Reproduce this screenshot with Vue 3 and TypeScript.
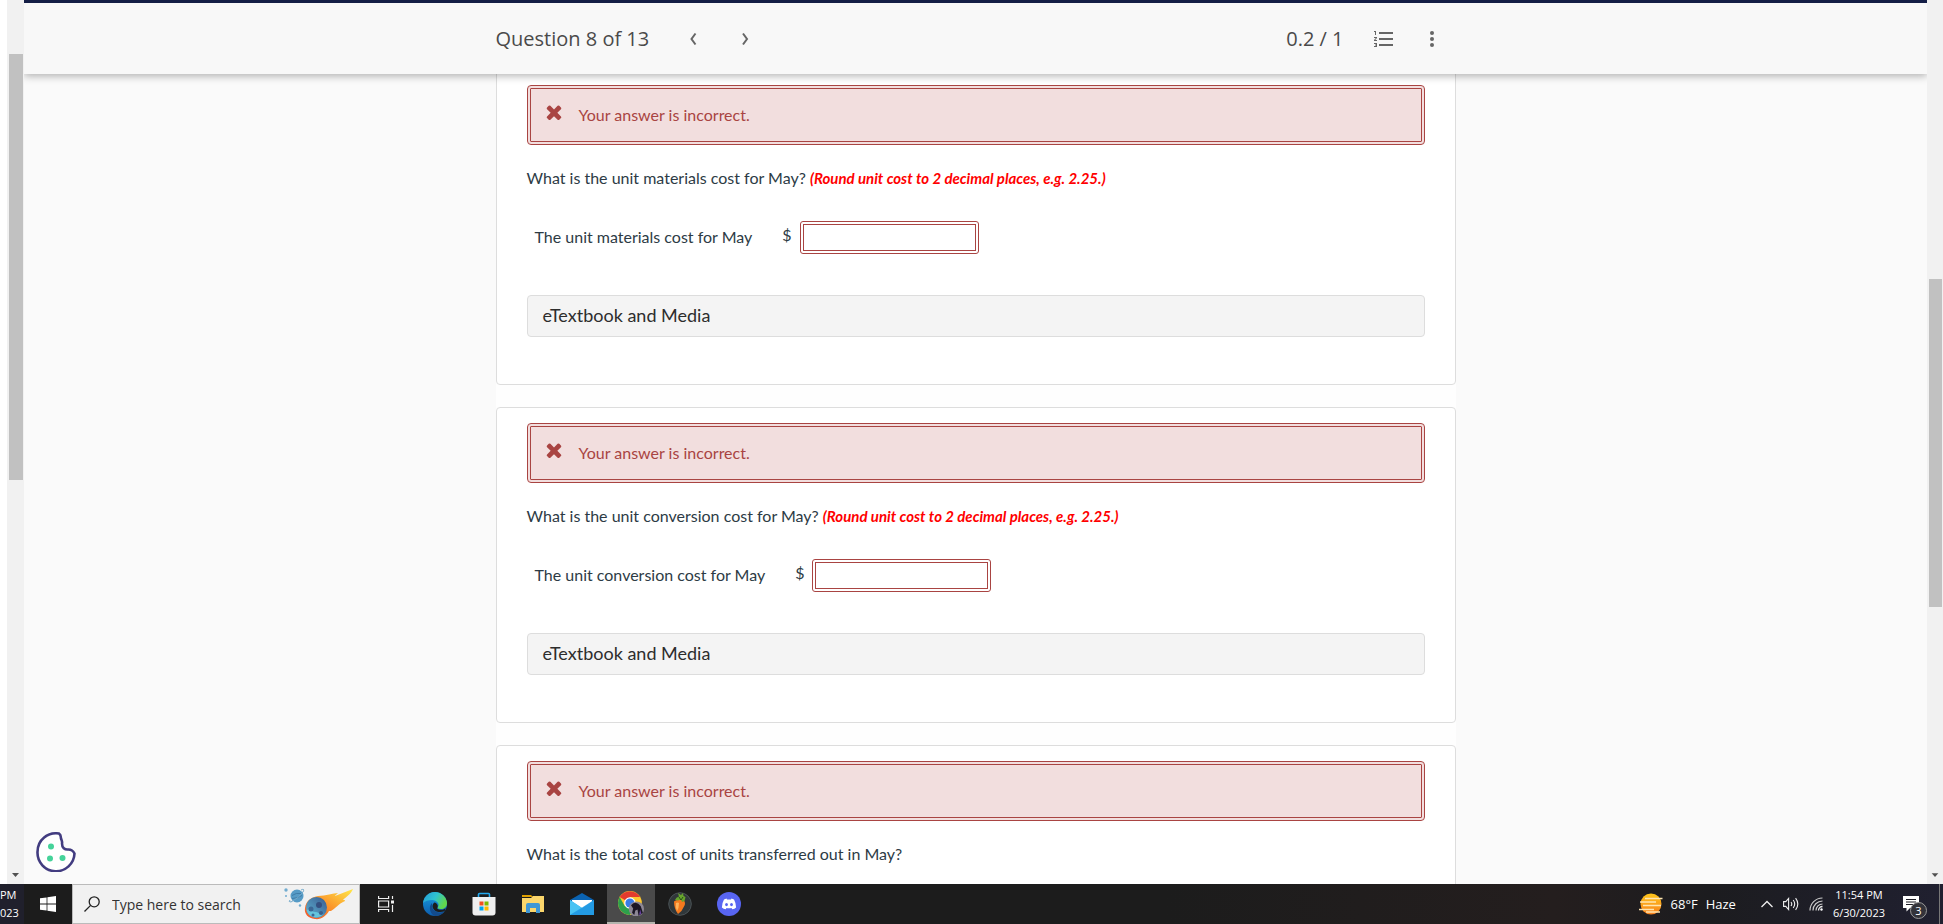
<script setup lang="ts">
import { ref } from 'vue'

interface Part {
  id: string
  question: string
  hint?: string
  label?: string
}

const parts: Part[] = [
  {
    id: 'materials',
    question: 'What is the unit materials cost for May?',
    hint: '(Round unit cost to 2 decimal places, e.g. 2.25.)',
    label: 'The unit materials cost for May',
  },
  {
    id: 'conversion',
    question: 'What is the unit conversion cost for May?',
    hint: '(Round unit cost to 2 decimal places, e.g. 2.25.)',
    label: 'The unit conversion cost for May',
  },
  { id: 'total', question: 'What is the total cost of units transferred out in May?' },
]

const answers = ref<Record<string, string>>({ materials: '', conversion: '' })

// Space before the thumb, thumb length, space after it.
const outerScroll = [54, 426, 387]
const pageScroll = [279, 328, 260]
const rows = (s: number[]) => ({ gridTemplateRows: s.map((n) => `${n}fr`).join(' ') })
</script>

<template>
  <div class="screen">
    <div class="workspace">
      <div class="edge"></div>
      <div class="scrollbar outer">
        <div class="track" :style="rows(outerScroll)"><span class="thumb"></span></div>
        <svg class="arrow" viewBox="0 0 17 17"><path d="M5 6h7l-3.500 4z" fill="#505050" /></svg>
      </div>

      <main class="main">
        <header class="topbar">
          <div class="topbar-inner">
            <h1 class="title">Question 8 of 13</h1>
            <nav class="pager">
              <button class="icon-btn" aria-label="Previous question">
                <svg viewBox="0 0 24 24" width="24" height="24"><path d="M14.500 6.500l-4 5.500 4 5.500" fill="none" stroke="#666" stroke-width="2" /></svg>
              </button>
              <button class="icon-btn" aria-label="Next question">
                <svg viewBox="0 0 24 24" width="24" height="24"><path d="M10 6.500l4 5.500-4 5.500" fill="none" stroke="#666" stroke-width="2" /></svg>
              </button>
            </nav>
            <span class="score">0.2 / 1</span>
            <button class="icon-btn" aria-label="Question list">
              <svg viewBox="0 0 24 24" width="24" height="24" fill="#666">
                <path d="M2 17h2v.5H3v1h1v.5H2v1h3v-4H2v1zm1-9h1V4H2v1h1v3zm-1 3h1.800L2 13.100v.9h3v-1H3.200L5 10.900V10H2v1zm5-6v2h14V5H7zm0 14h14v-2H7v2zm0-6h14v-2H7v2z" />
              </svg>
            </button>
            <button class="icon-btn" aria-label="More options">
              <svg viewBox="0 0 24 24" width="24" height="24" fill="#666">
                <circle cx="12" cy="6" r="2" /><circle cx="12" cy="12" r="2" /><circle cx="12" cy="18" r="2" />
              </svg>
            </button>
          </div>
        </header>

        <div class="column">
          <section v-for="p in parts" :key="p.id" class="card">
            <div class="alert" role="alert">
              <svg class="cross" viewBox="0 0 1792 1792" width="22" height="22">
                <path fill="#a94442" d="M1490 1322q0 40-28 68l-136 136q-28 28-68 28t-68-28l-294-294-294 294q-28 28-68 28t-68-28l-136-136q-28-28-28-68t28-68l294-294-294-294q-28-28-28-68t28-68l136-136q28-28 68-28t68 28l294 294 294-294q28-28 68-28t68 28l136 136q28 28 28 68t-28 68l-294 294 294 294q28 28 28 68z" />
              </svg>
              <span>Your answer is incorrect.</span>
            </div>
            <p class="question">{{ p.question }} <em v-if="p.hint" class="hint">{{ p.hint }}</em></p>
            <template v-if="p.label">
              <div class="answer">
                <label :for="p.id">{{ p.label }}</label>
                <span class="dollar">$</span>
                <input :id="p.id" v-model="answers[p.id]" type="text" class="field" />
              </div>
              <button class="media">eTextbook and Media</button>
            </template>
          </section>
        </div>

        <button class="cookie" aria-label="Cookie preferences">
          <svg viewBox="0 0 40 40" width="40" height="40">
            <path d="M23 1.500C12 0 1.500 7.500 1.500 20a18.500 18.500 0 0 0 37 1.500c-1.500-3-3.500-4-6-4-4 .5-6.500-2-6.500-6 .5-2-.5-3.500-1-5-.5-2 .5-3-2-5z" fill="#fff" stroke="#423c80" stroke-width="2.600" stroke-linejoin="round" />
            <g fill="#45d39a"><circle cx="15" cy="14.500" r="3" /><circle cx="14" cy="26.500" r="3" /><circle cx="26.500" cy="26" r="3" /></g>
          </svg>
        </button>
      </main>

      <div class="scrollbar">
        <div class="track" :style="rows(pageScroll)"><span class="thumb"></span></div>
        <svg class="arrow" viewBox="0 0 17 17"><path d="M5 6h7l-3.500 4z" fill="#505050" /></svg>
      </div>
    </div>

    <footer class="taskbar">
      <div class="clock-rest"><span>PM</span><span>023</span></div>
      <button class="task" aria-label="Start">
        <svg viewBox="0 0 16 16" width="16" height="16" fill="#fff"><path d="M0 2.300 6.600 1.400v6.200H0zM7.400 1.300 16 0v7.600H7.400zM0 8.400h6.600v6.200L0 13.700zM7.400 8.400H16V16l-8.600-1.300z" /></svg>
      </button>
      <label class="search">
        <svg viewBox="0 0 16 16" width="16" height="16" fill="none" stroke="#222" stroke-width="1.300"><circle cx="10.200" cy="5.800" r="5" /><path d="M6.600 9.400.5 15.500" /></svg>
        <input class="search-field" type="text" placeholder="Type here to search" aria-label="Type here to search" />
        <svg class="comet" viewBox="0 0 70 32" width="70" height="32">
          <defs>
            <linearGradient id="flame" x1="0" y1="1" x2="1" y2="0"><stop offset="0" stop-color="#f0502e" /><stop offset=".5" stop-color="#fb9a2c" /><stop offset="1" stop-color="#ffe94a" /></linearGradient>
            <linearGradient id="rock" x1="0" y1="1" x2="1" y2="0"><stop offset="0" stop-color="#5fb7d6" /><stop offset="1" stop-color="#38598e" /></linearGradient>
          </defs>
          <path d="M21 20c1-8 7-11 13-12 8 0 15-3 20-3-2 2-3 2-3 3 6-2 12-5 18-7-2 5-7 8-10 11 2 0 2 0 2 1-7 3-10 8-14 10l-2 0c-3 5-8 9-14 8-7-1-11-5-10-11z" fill="url(#flame)" />
          <circle cx="32.500" cy="19.500" r="10.500" fill="url(#rock)" />
          <path d="M22.500 22a10 10 0 0 0 17 4c-4 1-5-2-8-2-4 0-5-4-9-2z" fill="#65c4dd" />
          <circle cx="35" cy="17" r="3" fill="#344f80" /><circle cx="27" cy="21" r="2.500" fill="#3b6795" /><circle cx="37" cy="25" r="2" fill="#3a5f8c" /><circle cx="29" cy="27" r="1.500" fill="#3b6795" />
          <circle cx="13" cy="8" r="6.500" fill="#569bc6" /><path d="M8 7.500q4-3 9-2M8 10.500q5 0 10-3" stroke="#3f7da9" fill="none" />
          <path d="M17 2q4-2 2 2-4 6-12 10-3 0-1-2" fill="none" stroke="#74a9c9" stroke-width="1" />
          <g fill="#72acd0"><circle cx="2" cy="2" r="1.700" /><circle cx="2" cy="8" r="1" /><circle cx="16" cy="17.500" r="1.200" /></g>
        </svg>
      </label>

      <div class="apps">
        <button class="task" aria-label="Task view">
          <svg viewBox="0 0 16 16" width="16" height="16" fill="none" stroke="#eee" stroke-width="1.200"><path d="M.6 0v2.500h10V0M.6 16v-2.500h10V16M.6 5h10v6H.6zM14.500 0v3M14.500 9v7" /><path d="M13 4.500h3v3h-3z" fill="#eee" stroke="none" /></svg>
        </button>
        <button class="task" aria-label="Edge">
          <svg viewBox="0 0 24 24" width="24" height="24">
            <defs>
              <linearGradient id="edgeTop" x1="0" y1="0" x2="1" y2=".4"><stop offset="0" stop-color="#249bd8" /><stop offset=".55" stop-color="#2fc4d0" /><stop offset="1" stop-color="#61d64c" /></linearGradient>
              <linearGradient id="edgeSide" x1="0" y1="0" x2="0" y2="1"><stop offset="0" stop-color="#1aa0e2" /><stop offset="1" stop-color="#0c5cad" /></linearGradient>
            </defs>
            <circle cx="12" cy="12" r="12" fill="url(#edgeSide)" />
            <path d="M9 14c0 5 6 8 12.500 5.500A12 12 0 0 1 12 24C7 22 5 15 9 11z" fill="#134b8c" />
            <path d="M.1 11A12 12 0 0 1 24 11c0 4-3 6-6 6s-4-1-3-2c2-3-1-7-6-7-4 0-7 1-8.900 3z" fill="url(#edgeTop)" />
            <path d="M14.500 15.500c-1 1 .5 2.300 3.500 2.300 2.200 0 3.800-.8 4.600-1.800-.1 1.500-.5 2.400-1.100 3.300C16 21.500 9.500 19 9.500 14c0-1.500 1-3 2-3.500 2.500.5 4 3 3 5z" fill="#1d1d1d" />
          </svg>
        </button>
        <button class="task" aria-label="Store">
          <svg viewBox="0 0 24 24" width="24" height="24">
            <path d="M6.500 6V2.500Q6.500 1.500 7.500 1.500h9Q17.500 1.500 17.500 2.500V6" fill="none" stroke="#24a9ee" stroke-width="1.600" />
            <path d="M.5 5h23v15.500q0 3-3 3h-17q-3 0-3-3z" fill="#efefef" />
            <path d="M7.500 9.500h4v4h-4z" fill="#f25022" /><path d="M12.500 9.500h4v4h-4z" fill="#7fba00" /><path d="M7.500 14.500h4v4h-4z" fill="#00a4ef" /><path d="M12.500 14.500h4v4h-4z" fill="#ffb900" />
          </svg>
        </button>
        <button class="task" aria-label="File Explorer">
          <svg viewBox="0 0 24 24" width="24" height="24"><path d="M1 3h9l2 2H1z" fill="#dfa000" /><path d="M1 6h9l2-2h11v16H1z" fill="#fbd66b" /><path d="M5 21v-8q0-2 2-2h10q2 0 2 2v8h-4v-5H9v5z" fill="#3f97d5" /></svg>
        </button>
        <button class="task" aria-label="Mail">
          <svg viewBox="0 0 24 24" width="24" height="24"><path d="M0 8 12 1l12 7v8H0z" fill="#0b63b1" /><path d="M2 8h20v8H2z" fill="#fff" /><path d="M0 8l12 8 12-8v15H0z" fill="#29a9ea" /><path d="M0 8l12 8L0 23z" fill="#49c3f3" /><path d="M24 8v15H0z" fill="#1f93df" opacity=".6" /></svg>
        </button>
        <button class="task active" aria-label="Chrome">
          <svg viewBox="0 0 24 24" width="26" height="26">
            <circle cx="11" cy="12" r="11" fill="#fdc72e" />
            <path d="M11 12 1.500 6.500A11 11 0 0 1 20.500 6.500H11z" fill="#e33b2e" />
            <path d="M11 12 6.200 14.800 1.500 6.500A11 11 0 0 0 11 23l5-8.500z" fill="#2da04c" />
            <circle cx="11" cy="12" r="5.300" fill="#fff" /><circle cx="11" cy="12" r="4.200" fill="#3a7de8" />
            <circle cx="17" cy="17.500" r="7" fill="#8d8795" /><path d="M12 14q5-5 9 1l2 6-4 3-1-6-2 1-1 4-2-2 1-4z" fill="#1c1725" /><path d="M20.500 18l1 4-2 1z" fill="#6b42a8" />
          </svg>
        </button>
        <button class="task" aria-label="FL Studio">
          <svg viewBox="0 0 24 24" width="24" height="24">
            <circle cx="12" cy="12" r="11.300" fill="#30373a" stroke="#4b5356" />
            <path d="M6 9.500q3-3 10-1 2 3 0 6-2 5-6 7.500-4-5-4-12.500z" fill="#f47a1f" /><path d="M8 11q2-1 3 0 0 5-2 8-2-4-1-8z" fill="#ffb45c" />
            <path d="M7 8q1-3 4-3.500L10 1l3 2 2-2 .5 3 2 1-1 4-2.500 1-1-2.500-3 1z" fill="#67a52d" /><path d="M11 5l2 3 2-3" stroke="#274f18" fill="none" />
          </svg>
        </button>
        <button class="task" aria-label="Discord">
          <svg viewBox="0 0 24 24" width="24" height="24"><circle cx="12" cy="12" r="12" fill="#5865f2" /><path d="M9.500 6.500 7 7.500Q5 11 4.900 15.500 6.500 17 8.700 17.300l.8-1.300q2.500.6 5 0l.8 1.300q2.200-.3 3.800-1.800Q19 11 17 7.500l-2.500-1-.5 1h-4z" fill="#fff" /><ellipse cx="9.500" cy="12.600" rx="1.400" ry="1.600" fill="#5865f2" /><ellipse cx="14.500" cy="12.600" rx="1.400" ry="1.600" fill="#5865f2" /></svg>
        </button>
      </div>

      <div class="tray">
        <button class="weather">
          <svg viewBox="0 0 24 22" width="24" height="22">
            <defs><linearGradient id="sun" x1="0" y1="0" x2="0" y2="1"><stop offset="0" stop-color="#ffc61a" /><stop offset="1" stop-color="#f7801e" /></linearGradient></defs>
            <circle cx="12" cy="11" r="10.500" fill="url(#sun)" />
            <path d="M6 5.500h17.500M1 9h16M4 12.500h18M0 16.500h15M7 19h14" stroke="#ffe5b0" stroke-width="1.700" />
          </svg>
          <span>68°F</span><span>Haze</span>
        </button>
        <svg viewBox="0 0 12 8" width="12" height="8" fill="none" stroke="#eee" stroke-width="1.300"><path d="M.5 7 6 1.500 11.500 7" /></svg>
        <svg viewBox="0 0 16 14" width="16" height="14" fill="none" stroke="#eee" stroke-width="1.100"><path d="M.6 4.600h2.200L5.600 1.500v11L2.800 9.400H.6zM8 5q1.500 2 0 4M10.200 3q3 4 0 8M12.600 1.200q4.400 5.800 0 11.600" /></svg>
        <svg viewBox="0 0 14 14" width="14" height="14" fill="none"><path d="M1 13.500A12.500 12.500 0 0 1 13.500 1M4 13.500A9.500 9.500 0 0 1 13.500 4M7 13.500A6.500 6.500 0 0 1 13.500 7" stroke="#ccc" stroke-width="1.200" /><path d="M9.500 13.500a4 4 0 0 1 4-4" stroke="#eee" stroke-width="1.300" /><circle cx="12.500" cy="12.500" r="1.200" fill="#fff" /></svg>
        <div class="clock"><span>11:54 PM</span><span>6/30/2023</span></div>
        <button class="notes" aria-label="3 notifications">
          <svg viewBox="0 0 16 16" width="16" height="16"><path d="M0 0h16v12H7l-3.500 3.500V12H0z" fill="#fff" /><path d="M3 3.500h10M3 6h10M3 8.500h10" stroke="#1c1c24" /></svg>
          <span class="badge">3</span>
        </button>
        <span class="peek"></span>
      </div>
    </footer>
  </div>
</template>

<style>
body {
  margin: 0;
}
</style>

<style scoped>
* {
  box-sizing: border-box;
}
button {
  padding: 0;
  border: 0;
  background: none;
  font: inherit;
  color: inherit;
}
svg {
  display: block;
  flex: none;
}
.screen {
  display: flex;
  flex-direction: column;
  height: 100vh;
  overflow: hidden;
  font-family: Lato, "Liberation Sans", sans-serif;
  color: #2d3b45;
}
.workspace {
  display: flex;
  flex: 1;
  min-height: 0;
}
.edge {
  width: 7px;
  background: #fff;
}
.scrollbar {
  display: flex;
  flex-direction: column;
  width: 16px;
  background: #f1f1f1;
}
.outer {
  width: 17px;
}
.track {
  display: grid;
  flex: 1;
  padding: 0 1px 0 2px;
}
.thumb {
  grid-row: 2;
  background: #c1c1c1;
}
.arrow {
  width: 100%;
  height: 17px;
}
.main {
  position: relative;
  flex: 1;
  min-width: 0;
  overflow: hidden;
  background: #fafafa;
}
.topbar {
  position: relative;
  z-index: 2;
  height: 74px;
  border-top: 3px solid #141e46;
  background: #f8f8f8;
  box-shadow: 0 2px 8px rgba(0, 0, 0, 0.3);
}
.topbar-inner {
  display: flex;
  align-items: center;
  max-width: 960px;
  height: 100%;
  margin: 0 auto;
  font-family: "Open Sans", "Noto Sans", sans-serif;
  font-size: 20px;
  line-height: 28px;
  color: #4a4a4a;
}
.title {
  margin: 0;
  font-size: 20px;
  font-weight: 400;
}
.pager {
  display: flex;
  gap: 4px;
  margin: 0 auto 0 20px;
}
.icon-btn {
  display: grid;
  place-items: center;
  width: 48px;
  height: 48px;
}
.score {
  margin-right: 16px;
}
.column {
  display: flex;
  flex-direction: column;
  gap: 22px;
  max-width: 960px;
  margin: -5px auto 0;
  background: #fefefe;
}
.card {
  padding: 15px 30px 47px;
  border: 1px solid #ddd;
  border-radius: 4px;
  background: #fff;
  font-size: 16px;
  line-height: 24px;
}
.alert {
  display: flex;
  gap: 14px;
  height: 60px;
  padding: 12px;
  border: 4px double #a94442;
  border-radius: 4px;
  background: #f2dede;
  color: #a94442;
}
.alert span {
  padding: 2px 0;
}
.question {
  margin: 21px 0 31px;
}
.hint {
  color: #f00;
  font-size: 15px;
  font-weight: 700;
}
.answer {
  display: flex;
  height: 33px;
  padding-left: 8px;
}
.answer label {
  padding-top: 4px;
}
.dollar {
  padding-top: 2px;
  margin: 0 8px 0 30px;
}
.field {
  width: 179px;
  height: 33px;
  padding: 0 8px;
  border: 4px double #a94442;
  border-radius: 3px;
  background: #fff;
  font: inherit;
}
.media {
  display: block;
  width: 100%;
  height: 42px;
  margin-top: 41px;
  padding: 0 15px 2px;
  border: 1px solid #ddd;
  border-radius: 4px;
  background: #f4f4f4;
  color: #2d2d2d;
  font-size: 18px;
  text-align: left;
}
.cookie {
  position: absolute;
  left: 12px;
  bottom: 12px;
}
.taskbar {
  display: flex;
  height: 40px;
  background: linear-gradient(90deg, #1c1c1c 60%, #241e1e 80%, #1c1c1f 88%, #202030);
  color: #fff;
  font-family: "Open Sans", "Noto Sans", sans-serif;
}
.clock-rest,
.clock {
  display: flex;
  flex-direction: column;
  justify-content: center;
  font-size: 11px;
  line-height: 18px;
}
.clock-rest {
  width: 24px;
  background: #20202c;
}
.task {
  display: grid;
  place-items: center;
  width: 48px;
  height: 40px;
}
.search {
  display: flex;
  align-items: center;
  width: 288px;
  padding: 0 5px 0 11px;
  border: 1px solid #bbb;
  background: #f1f1f1;
}
.search-field {
  flex: 1;
  min-width: 0;
  margin-left: 12px;
  padding: 0;
  border: 0;
  background: none;
  font: 14px "Open Sans", "Noto Sans", sans-serif;
}
.search-field::placeholder {
  color: #333;
  opacity: 1;
}
.apps {
  display: flex;
  gap: 1px;
  padding-left: 2px;
}
.active {
  border-bottom: 2px solid #b4b4ae;
  background: #4a4a4a;
}
.tray {
  display: flex;
  align-items: center;
  gap: 10px;
  margin-left: auto;
}
.weather {
  display: flex;
  align-items: center;
  gap: 8px;
  margin-right: 15px;
  font-size: 13px;
}
.clock {
  align-items: center;
}
.notes {
  position: relative;
  margin: 0 2px 0 8px;
  padding-right: 8px;
}
.badge {
  position: absolute;
  left: 7px;
  top: 6px;
  width: 17px;
  height: 17px;
  border: 1px solid #999;
  border-radius: 50%;
  background: #33333a;
  font-size: 11px;
  line-height: 15px;
}
.peek {
  width: 4px;
  height: 40px;
  border-left: 1px solid #777;
}
</style>
